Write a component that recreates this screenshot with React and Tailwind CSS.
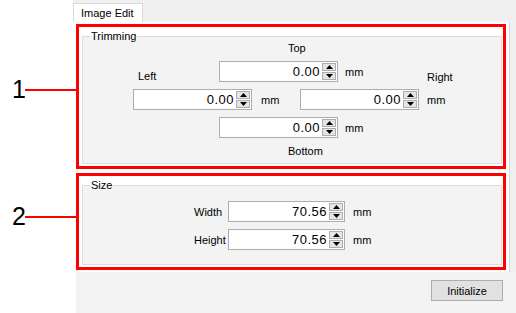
import React from 'react';

function Arrow({ down }) {
  return (
    <svg width="7" height="4" viewBox="0 0 7 4">
      <polygon points={down ? '0,0 7,0 3.5,4' : '3.5,0 7,4 0,4'} fill="#000" />
    </svg>
  );
}

function Spin({ value, width = 'w-[119px]' }) {
  return (
    <div className={`${width} h-[21px] border border-[#adadad] bg-white flex`}>
      <div className="flex-1 flex items-center justify-end pr-[2px] text-[13px] tracking-[0.5px] leading-none">
        {value}
      </div>
      <div className="w-[14px] my-px mr-px flex flex-col gap-px">
        <div className="flex-1 flex items-center justify-center border border-[#adadad] bg-[#e5e5e5]">
          <Arrow />
        </div>
        <div className="flex-1 flex items-center justify-center border border-[#adadad] bg-[#e5e5e5]">
          <Arrow down />
        </div>
      </div>
    </div>
  );
}

function Group({ title, children }) {
  return (
    <div className="relative h-full border border-[#dcdcdc] bg-[#f3f3f3]">
      <span className="absolute left-[7px] -top-[8px] px-px text-[11px] leading-[14px] bg-linear-to-b from-white from-50% to-[#f3f3f3] to-50%">
        {title}
      </span>
      {children}
    </div>
  );
}

function Marker({ n, className }) {
  return (
    <div className={`${className} h-[25px] flex items-center pl-[12px]`}>
      <span className="w-[13px] text-[25px] leading-[25px]">{n}</span>
      <div className="flex-1 h-[2px] bg-[#ff0000]" />
    </div>
  );
}

export default function App() {
  return (
    <div className="w-[516px] h-[313px] bg-white flex flex-col text-black text-[11px] font-['Liberation_Sans',Arial,sans-serif] overflow-hidden">
      <div className="h-[22px] flex">
        <div className="w-[73px] bg-white" />
        <div className="flex-1 bg-[#f0f0f0] pt-[3px]">
          <div className="w-[70px] h-[19px] border border-b-0 border-[#d9d9d9] bg-white flex items-center pl-[7px] leading-[14px]">
            Image Edit
          </div>
        </div>
      </div>

      <div className="flex-1 flex">
        <div className="w-[76px] flex flex-col">
          <Marker n="1" className="mt-[55px]" />
          <Marker n="2" className="mt-[102px]" />
        </div>

        <div className="flex-1 flex flex-col bg-[#f3f3f3]">
          <div className="flex bg-white">
            <div className="w-[433px] pt-[2px] pb-[2px] pr-[3px] flex flex-col gap-[4px]">
              <div className="h-[145px] border-[3px] border-[#ff0000] bg-white pt-[9px] pl-[3px] pr-px pb-[2px]">
                <Group title="Trimming">
                  <div className="mt-[4px] h-[14px] leading-[14px] pl-[205px]">Top</div>
                  <div className="mt-[6px] h-[21px] flex items-start">
                    <span className="ml-[55px] w-[81px] mt-[8px] leading-[14px]">Left</span>
                    <Spin value="0.00" />
                    <span className="ml-[7px] w-[82px] self-center leading-[14px]">mm</span>
                    <span className="mt-[9px] leading-[14px]">Right</span>
                  </div>
                  <div className="mt-[7px] h-[21px] flex items-center">
                    <div className="ml-[50px]">
                      <Spin value="0.00" />
                    </div>
                    <span className="ml-[9px] w-[39px] leading-[14px]">mm</span>
                    <Spin value="0.00" />
                    <span className="ml-[8px] leading-[14px]">mm</span>
                  </div>
                  <div className="mt-[7px] h-[21px] flex items-center">
                    <div className="ml-[136px]">
                      <Spin value="0.00" />
                    </div>
                    <span className="ml-[7px] leading-[14px]">mm</span>
                  </div>
                  <div className="mt-[6px] h-[14px] leading-[14px] pl-[205px]">Bottom</div>
                </Group>
              </div>

              <div className="h-[97px] border-[3px] border-[#ff0000] bg-white pt-[9px] pl-[3px] pr-px pb-[2px]">
                <Group title="Size">
                  <div className="mt-[15px] h-[21px] flex items-center">
                    <span className="ml-[111px] w-[34px] leading-[14px]">Width</span>
                    <Spin value="70.56" width="w-[117px]" />
                    <span className="ml-[8px] leading-[14px]">mm</span>
                  </div>
                  <div className="mt-[7px] h-[21px] flex items-center">
                    <span className="ml-[111px] w-[34px] leading-[14px]">Height</span>
                    <Spin value="70.56" width="w-[117px]" />
                    <span className="ml-[8px] leading-[14px]">mm</span>
                  </div>
                </Group>
              </div>
            </div>
            <div className="w-px bg-[#d9d9d9]" />
            <div className="flex-1 bg-[#f0f0f0]" />
          </div>

          <div className="pt-[8px] pl-[355px]">
            <button className="w-[72px] h-[21px] border border-[#adadad] bg-[#e1e1e1] flex items-center justify-center leading-[14px]">
              Initialize
            </button>
          </div>
        </div>
      </div>
    </div>
  );
}
